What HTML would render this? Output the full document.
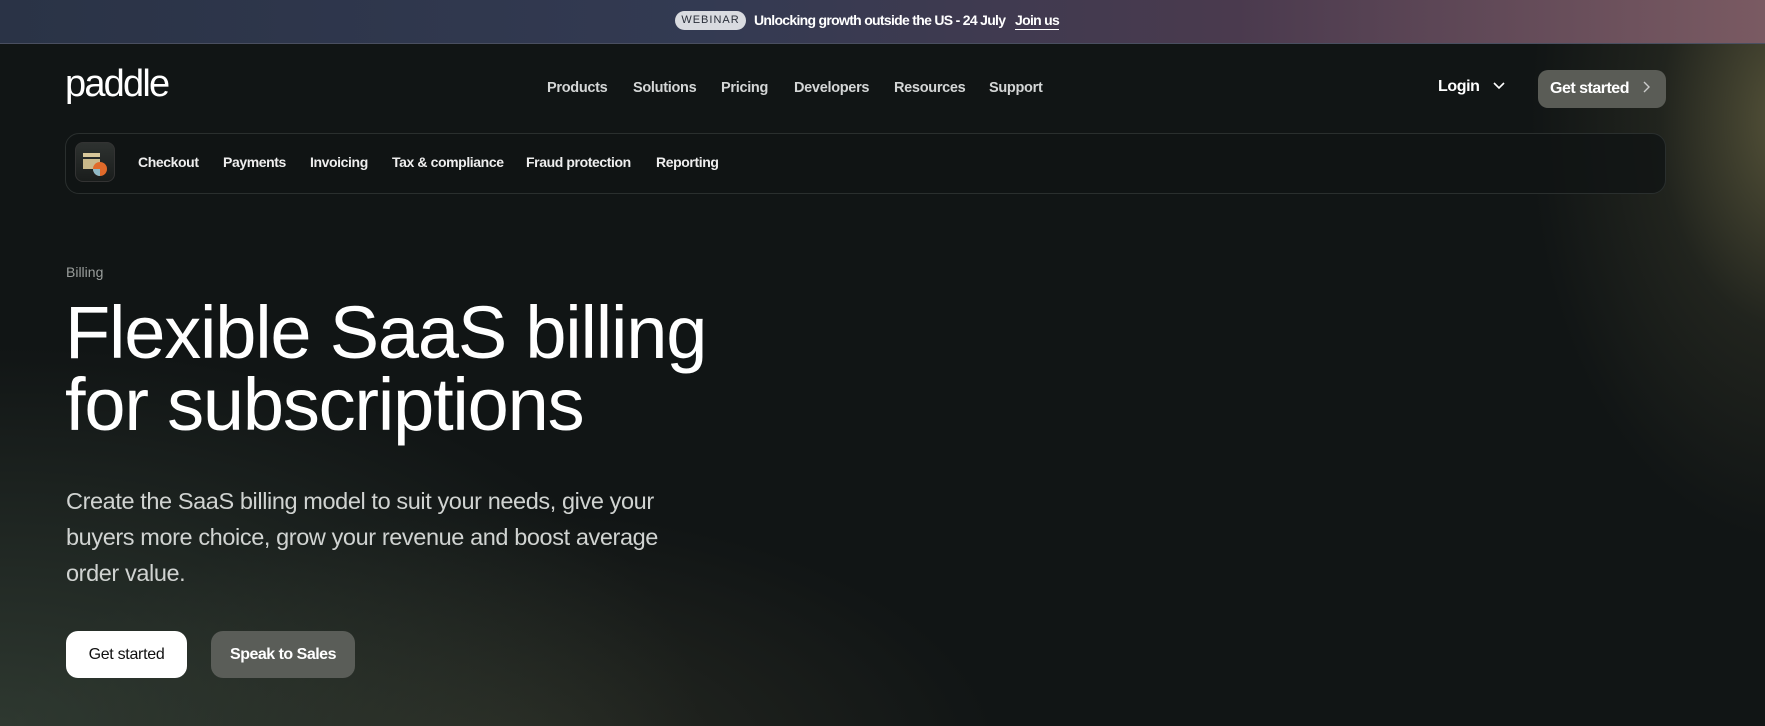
<!DOCTYPE html>
<html><head><meta charset="utf-8"><style>
*{margin:0;padding:0;box-sizing:border-box}
html,body{width:1765px;height:726px;overflow:hidden}
body{font-family:"Liberation Sans",sans-serif;color:#fff;background:#111515;position:relative}
.bg{position:absolute;inset:0;background:
radial-gradient(ellipse 260px 420px at 1790px 120px,rgba(110,105,70,.75),rgba(70,70,50,.3) 50%,transparent 100%),
radial-gradient(ellipse 700px 380px at 0px 726px,rgba(70,85,70,.55),transparent 100%),
radial-gradient(ellipse 500px 250px at 500px 760px,rgba(80,80,60,.35),transparent 100%),
#111515}
.banner{position:absolute;left:0;top:0;width:1765px;height:44px;background:linear-gradient(90deg,#2a3346 0%,#333a52 40%,#4a3a4e 70%,#7a5a62 100%);border-bottom:1px solid #4a4f60;font-size:14px;font-weight:bold;letter-spacing:-.7px}
.pill{position:absolute;left:675px;top:11px;width:71px;height:19px;border-radius:10px;background:#d9dbe0;color:#2a2f3a;font-size:11px;font-weight:normal;letter-spacing:1px;text-align:center;line-height:19px}
.bt{position:absolute;left:754px;top:12px}
.join{position:absolute;left:1015px;top:12px;border-bottom:1.5px solid #fff;padding-bottom:1px}
.logo{position:absolute;left:65px;top:63px;font-size:38px;letter-spacing:-1.8px;font-weight:normal}
.nav{position:absolute;top:80px;font-size:14.5px;font-weight:bold;color:#d4d6d6;letter-spacing:-.3px}
.login{position:absolute;left:1438px;top:78px;font-size:16px;font-weight:bold;letter-spacing:-.4px}
.gs{position:absolute;left:1538px;top:70px;width:128px;height:38px;border-radius:10px;background:#5a5c56;font-size:16px;font-weight:bold;letter-spacing:-.5px;line-height:38px;padding-left:12px}
.sub{position:absolute;left:65px;top:133px;width:1601px;height:61px;border:1.5px solid #2a2f2e;border-radius:14px;background:rgba(16,20,20,.8)}
.ic{position:absolute;left:9px;top:8px;width:40px;height:40px;border-radius:8px;background:linear-gradient(#2e3230,#1a1d1c);border:1px solid #333}
.si{position:absolute;top:20px;font-size:14px;font-weight:bold;letter-spacing:-.4px;color:#eee}
.bill{position:absolute;left:66px;top:264px;font-size:14px;color:#9a9e9c}
h1{position:absolute;left:65px;top:297px;font-size:74px;line-height:72px;font-weight:normal;letter-spacing:-1.2px}
p{position:absolute;left:66px;top:483px;width:640px;font-size:23.5px;line-height:36px;color:#d0d3d1;letter-spacing:-.4px}
.b1{position:absolute;left:66px;top:631px;width:121px;height:47px;border-radius:12px;background:#fff;color:#111;font-size:16px;text-align:center;line-height:47px;letter-spacing:-.3px}
.b2{position:absolute;left:211px;top:631px;width:144px;height:47px;border-radius:12px;background:#5a5d58;font-size:16px;font-weight:bold;text-align:center;line-height:47px;letter-spacing:-.5px}
</style></head><body>
<div class="bg"></div>
<div class="banner"><div class="pill">WEBINAR</div><div class="bt">Unlocking growth outside the US - 24 July</div><div class="join">Join us</div></div>
<div class="logo">paddle</div>
<div class="nav" style="left:547px">Products</div>
<div class="nav" style="left:633px">Solutions</div>
<div class="nav" style="left:721px">Pricing</div>
<div class="nav" style="left:794px">Developers</div>
<div class="nav" style="left:894px">Resources</div>
<div class="nav" style="left:989px">Support</div>
<div class="login">Login <svg width="14" height="10" viewBox="0 0 14 10" style="margin-left:8px"><path d="M2 2l5 5 5-5" fill="none" stroke="#fff" stroke-width="1.6"/></svg></div>
<div class="gs">Get started <svg width="10" height="12" viewBox="0 0 10 12" style="margin-left:8px"><path d="M3 1l5 5-5 5" fill="none" stroke="#ccc" stroke-width="1.4"/></svg></div>
<div class="sub"><div class="ic"><svg width="40" height="40" viewBox="0 0 40 40"><rect x="7" y="10" width="17" height="4" fill="#d8c79a"/><rect x="7" y="16" width="17" height="10" fill="#c9b88a"/><circle cx="24" cy="26" r="7" fill="#e06a2a"/><path d="M24 26v7a7 7 0 0 1-7-7z" fill="#8fb9c6"/></svg></div>
<div class="si" style="left:72px">Checkout</div>
<div class="si" style="left:157px">Payments</div>
<div class="si" style="left:244px">Invoicing</div>
<div class="si" style="left:326px">Tax &amp; compliance</div>
<div class="si" style="left:460px">Fraud protection</div>
<div class="si" style="left:590px">Reporting</div>
</div>
<div class="bill">Billing</div>
<h1>Flexible SaaS billing<br>for subscriptions</h1>
<p>Create the SaaS billing model to suit your needs, give your buyers more choice, grow your revenue and boost average order value.</p>
<div class="b1">Get started</div>
<div class="b2">Speak to Sales</div>
</body></html>
